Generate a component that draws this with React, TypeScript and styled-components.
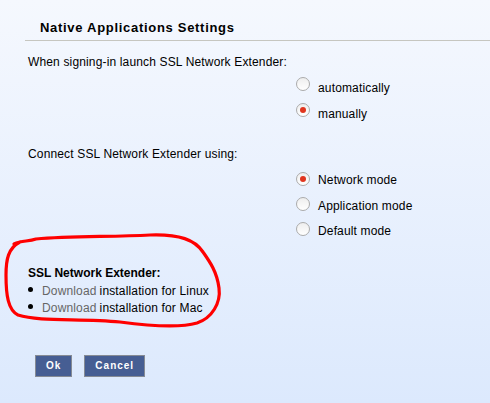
import styled, { createGlobalStyle } from 'styled-components';

const GlobalStyle = createGlobalStyle`
  html, body {
    margin: 0;
    padding: 0;
  }
  body {
    font-family: "Liberation Sans", Arial, sans-serif;
    color: #000;
  }
`;

const Page = styled.div`
  position: relative;
  width: 490px;
  height: 403px;
  overflow: hidden;
  box-sizing: border-box;
  padding-top: 20px;
  background: linear-gradient(180deg, #f5f8fe 0%, #dce9fd 100%);
  letter-spacing: 0.15px;
`;

const Header = styled.div`
  margin-left: 25px;
  padding: 0 0 4px 15px;
  border-bottom: 1px solid #c6c6c0;
`;

const Title = styled.h2`
  margin: 0;
  font-size: 13px;
  line-height: 16px;
  font-weight: bold;
  letter-spacing: 0.7px;
`;

const Section = styled.div<{ $top: number }>`
  margin-top: ${(p) => p.$top}px;
  padding-left: 28px;
`;

const Question = styled.div`
  font-size: 12px;
  line-height: 14px;
`;

const Options = styled.div<{ $top: number }>`
  display: flex;
  flex-direction: column;
  margin: ${(p) => p.$top}px 0 0 268px;
`;

const OptionRow = styled.label<{ $h: number }>`
  display: flex;
  align-items: flex-start;
  gap: 8px;
  height: ${(p) => p.$h}px;
  font-size: 12px;
  line-height: 14px;
`;

const Radio = styled.span<{ $checked?: boolean }>`
  flex: none;
  display: flex;
  align-items: center;
  justify-content: center;
  box-sizing: border-box;
  width: 14px;
  height: 14px;
  border: 1px solid #ababab;
  border-radius: 50%;
  background: linear-gradient(180deg, #eeeeee 0%, #ffffff 100%);

  &::after {
    content: '';
    display: ${(p) => (p.$checked ? 'block' : 'none')};
    width: 6px;
    height: 6px;
    border-radius: 50%;
    background: #e0351f;
  }
`;

const OptionText = styled.span<{ $drop: number }>`
  padding-top: ${(p) => p.$drop}px;
`;

const Heading = styled.div`
  font-size: 12px;
  line-height: 17px;
  font-weight: bold;
  letter-spacing: 0;
  margin-bottom: 1px;
`;

const List = styled.ul`
  margin: 0;
  padding: 0;
  list-style: none;
`;

const Item = styled.li`
  display: flex;
  align-items: flex-start;
  font-size: 12px;
  line-height: 17px;

  &::before {
    content: '';
    flex: none;
    width: 5px;
    height: 5px;
    margin: 4px 9px 0 0;
    border-radius: 50%;
    background: #000;
  }
`;

const DownloadLink = styled.a`
  color: #666;
  text-decoration: none;
  margin-right: 3px;
`;

const Buttons = styled.div`
  display: flex;
  gap: 12px;
  margin-top: 38px;
  padding-left: 35px;
`;

const Button = styled.button`
  box-sizing: border-box;
  height: 22px;
  padding: 0 10px;
  border: 1px solid #868b94;
  border-radius: 0;
  background: #465e93;
  color: #fff;
  font-family: "Liberation Sans", Arial, sans-serif;
  font-size: 10px;
  font-weight: bold;
  letter-spacing: 1px;
`;

const Scribble = styled.svg`
  position: absolute;
  left: 0;
  top: 0;
  pointer-events: none;
`;

const loop =
  'M 14 244 C 22 240, 28 242, 36 239 C 70 236, 110 237, 150 235 C 180 234, 195 240, 203 252 ' +
  'C 210 262, 217 272, 219 288 C 221 303, 212 318, 197 323 C 180 328, 150 326, 120 322 ' +
  'C 80 318, 40 322, 18 315 C 8 310, 6 295, 6 275 C 6 260, 8 248, 20 242';

const App = () => (
  <>
    <GlobalStyle />
    <Page>
      <Header>
        <Title>Native Applications Settings</Title>
      </Header>

      <Section $top={14}>
        <Question>When signing-in launch SSL Network Extender:</Question>
        <Options $top={8}>
          <OptionRow $h={26}>
            <Radio />
            <OptionText $drop={4}>automatically</OptionText>
          </OptionRow>
          <OptionRow $h={26}>
            <Radio $checked />
            <OptionText $drop={4}>manually</OptionText>
          </OptionRow>
        </Options>
      </Section>

      <Section $top={18}>
        <Question>Connect SSL Network Extender using:</Question>
        <Options $top={11}>
          <OptionRow $h={25}>
            <Radio $checked />
            <OptionText $drop={1}>Network mode</OptionText>
          </OptionRow>
          <OptionRow $h={25}>
            <Radio />
            <OptionText $drop={2}>Application mode</OptionText>
          </OptionRow>
          <OptionRow $h={26}>
            <Radio />
            <OptionText $drop={2}>Default mode</OptionText>
          </OptionRow>
        </Options>
      </Section>

      <Section $top={16.5}>
        <Heading>SSL Network Extender:</Heading>
        <List>
          <Item>
            <span>
              <DownloadLink href="#">Download</DownloadLink>installation for Linux
            </span>
          </Item>
          <Item>
            <span>
              <DownloadLink href="#">Download</DownloadLink>installation for Mac
            </span>
          </Item>
        </List>
      </Section>

      <Buttons>
        <Button>Ok</Button>
        <Button>Cancel</Button>
      </Buttons>

      <Scribble width="490" height="403" viewBox="0 0 490 403">
        <path d={loop} fill="none" stroke="#ff0000" strokeWidth="3.2" strokeLinecap="round" strokeLinejoin="round" />
      </Scribble>
    </Page>
  </>
);

export default App;
